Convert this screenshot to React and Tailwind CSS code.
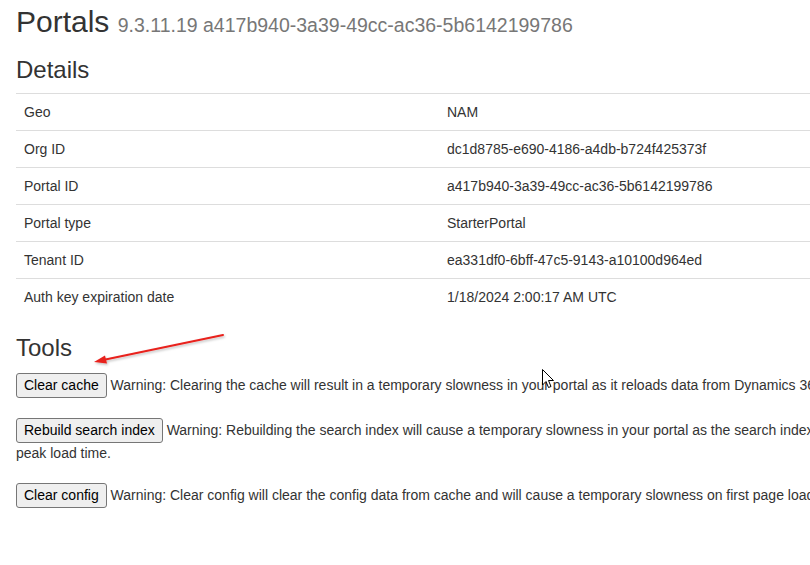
import React from 'react';

const details = [
  ['Geo', 'NAM'],
  ['Org ID', 'dc1d8785-e690-4186-a4db-b724f425373f'],
  ['Portal ID', 'a417b940-3a39-49cc-ac36-5b6142199786'],
  ['Portal type', 'StarterPortal'],
  ['Tenant ID', 'ea331df0-6bff-47c5-9143-a10100d964ed'],
  ['Auth key expiration date', '1/18/2024 2:00:17 AM UTC'],
];

function ToolButton({ children }) {
  return (
    <button className="inline-block h-[25px] px-[7px] py-0 leading-[23px] text-[14px] text-black bg-[#efefef] border border-[#767676] rounded-[3px] align-baseline">
      {children}
    </button>
  );
}

export default function App() {
  return (
    <div
      className="relative w-[810px] h-[565px] overflow-hidden bg-white text-[#333] text-[14px] leading-[20px]"
      style={{ fontFamily: '"Liberation Sans", Arial, sans-serif' }}
    >
      <div className="w-[1035px] pl-4">
        <h1 className="mt-[5px] text-[30px] leading-[33px] text-[#333]">
          Portals <small className="text-[65%] text-[#777]">9.3.11.19 a417b940-3a39-49cc-ac36-5b6142199786</small>
        </h1>

        <h3 className="mt-[15px] mb-[10px] text-[24px] leading-[26.4px]">Details</h3>

        <table className="w-full mb-5 border-collapse">
          <tbody>
            {details.map(([k, v]) => (
              <tr key={k} className="border-t border-[#ddd]">
                <td className="w-[423px] px-2 py-2 align-top">{k}</td>
                <td className="px-2 py-2 align-top">{v}</td>
              </tr>
            ))}
          </tbody>
        </table>

        <h3 className="text-[24px] leading-[26.4px] mb-[11px]">Tools</h3>

        <div className="mb-5">
          <ToolButton>Clear cache</ToolButton> Warning: Clearing the cache will result in a temporary slowness in your portal as it reloads data from Dynamics 365.
        </div>

        <div className="mb-5">
          <ToolButton>Rebuild search index</ToolButton> Warning: Rebuilding the search index will cause a temporary slowness in your portal as the search index is rebuilt. Perform this during off-peak load time.
        </div>

        <div className="mb-5">
          <ToolButton>Clear config</ToolButton> Warning: Clear config will clear the config data from cache and will cause a temporary slowness on first page load.
        </div>
      </div>

      {/* annotation arrow */}
      <svg className="absolute left-0 top-0 pointer-events-none" width="810" height="565">
        <defs>
          <filter id="sh" x="-10%" y="-50%" width="120%" height="200%">
            <feDropShadow dx="1" dy="1.5" stdDeviation="1" floodColor="#000" floodOpacity="0.25" />
          </filter>
        </defs>
        <g filter="url(#sh)">
          <line x1="223" y1="335" x2="103" y2="360" stroke="#e8211d" strokeWidth="2" strokeLinecap="round" />
          <polygon points="94,362 105,355.5 107,363.5" fill="#e8211d" />
        </g>
      </svg>

      {/* mouse cursor */}
      <svg className="absolute pointer-events-none" style={{ left: 542, top: 369 }} width="13" height="20" viewBox="0 0 13 20">
        <path d="M0.5 0.5 L0.5 16 L4 12.5 L6.5 18.5 L9 17.5 L6.5 11.5 L11.5 11.5 Z" fill="#fff" stroke="#000" strokeWidth="1" strokeLinejoin="round" />
      </svg>
    </div>
  );
}
